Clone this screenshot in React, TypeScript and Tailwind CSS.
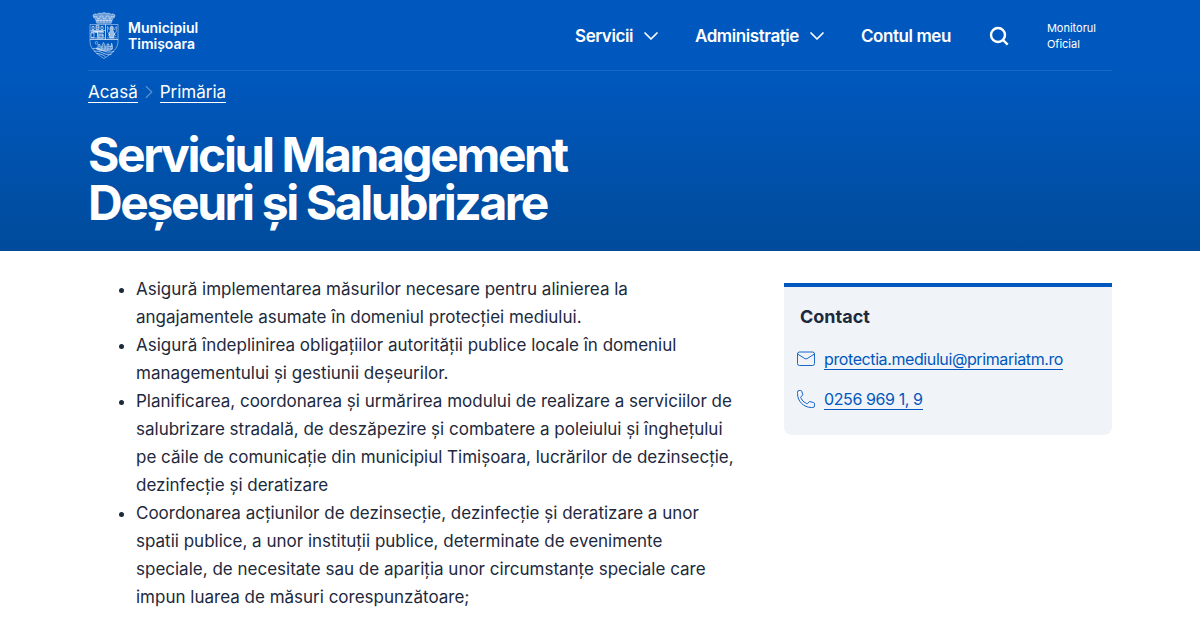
import { ChevronDown, ChevronRight } from 'lucide-react'

const duties: string[] = [
  'Asigură implementarea măsurilor necesare pentru alinierea la angajamentele asumate în domeniul protecției mediului.',
  'Asigură îndeplinirea obligațiilor autorității publice locale în domeniul managementului și gestiunii deșeurilor.',
  'Planificarea, coordonarea și urmărirea modului de realizare a serviciilor de salubrizare stradală, de deszăpezire și combatere a poleiului și înghețului pe căile de comunicație din municipiul Timișoara, lucrărilor de dezinsecție, dezinfecție și deratizare',
  'Coordonarea acțiunilor de dezinsecție, dezinfecție și deratizare a unor spatii publice, a unor instituții publice, determinate de evenimente speciale, de necesitate sau de apariția unor circumstanțe speciale care impun luarea de măsuri corespunzătoare;',
]

function Crest() {
  return (
    <svg
      className="h-12 w-8 shrink-0"
      viewBox="0 0 32 48"
      fill="none"
      stroke="#fff"
      strokeWidth="0.6"
      strokeOpacity="0.75"
      aria-hidden="true"
    >
      {/* mural crown */}
      <path d="M5 3l2-1.2 2 .6 2-1.4 2 .6 3-1 3 1 2-.6 2 1.4 2-.6L27 3l-.6 2.6-1.6.6-1.6 5H8.800L7.200 6.200 5.600 5.600z" fill="#fff" fillOpacity="0.4" />
      <path d="M6 4.500h3v2h3V4h3v2.500h3V4h3v2.500h2v-2h3M8 8.500h16M10 7v3M13 7v3M16 7v4M19 7v3M22 7v3" />
      {/* shield */}
      <path d="M2 12.500h28v17c0 7-6 12-14 17-8-5-14-10-14-17z" />
      <path d="M2 27.500h28M17.500 12.500v15" strokeWidth="0.9" />
      {/* fortress */}
      <path d="M2.500 18.500h14.500M4 14.500h2v3H4zM8 13.500h3v4H8zM13 14.500h2v3h-2zM3 21h3v4.500H3zM7.500 20h2v5M11 22h4v4h-4zM3 26h14M5 19.500h10M10 21v6" strokeWidth="0.8" />
      <path d="M3 19h13v2H3zM8 14.500h3v2H8zM11.500 22.500h4v2h-4z" fill="#fff" fillOpacity="0.5" stroke="none" />
      {/* winged figure */}
      <path d="M23.700 14l1.600 1-.3 3.500 1.400 3-.7 4.500h-4l-.7-4.500 1.400-3-.3-3.500z" fill="#fff" fillOpacity="0.6" />
      <path d="M21.500 18l-2-3.500v5l2 3.500M26 18l2.300-3.500v5L26 23M19 26h10M20 24l2-2M28 24l-2-2" />
      {/* town and bridge */}
      <circle cx="8.500" cy="30.800" r="1.300" />
      <path d="M8 36.500l2-1.500v-2.500h2V35h2v-2l1.500-2.500L17 33v2h2v-3h2v2.500h2.500V31l1 2.500V37l-3 1.500H12z" fill="#fff" fillOpacity="0.25" />
      <path d="M9 37h15M11 35.500v2M14 34v4M17 34v4M20 34v4M23 33v4" />
      {/* river */}
      <path d="M4.500 36.500c4-.5 7 .5 10 2s7 2.200 11.500 1M6 39c4 0 6 .5 9 2s5 1.500 8.500 1.300M8.500 41.500c3 0 6 .8 9 3.200" strokeWidth="0.8" />
    </svg>
  )
}

function SearchIcon() {
  return (
    <svg width="20" height="20" viewBox="0 0 20 20" fill="none" stroke="currentColor" strokeWidth="2.4" aria-hidden="true">
      <circle cx="9" cy="9" r="7" />
      <path d="M14 14l4.700 4.700" />
    </svg>
  )
}

function MailIcon() {
  return (
    <svg className="shrink-0" width="20" height="20" viewBox="0 0 20 20" fill="none" stroke="currentColor" strokeWidth="0.9" aria-hidden="true">
      <rect x="1.500" y="3" width="17" height="13.500" rx="2" />
      <path d="M1.500 5l7.400 4.600a2.100 2.100 0 0 0 2.200 0l7.400-4.600" />
    </svg>
  )
}

function PhoneIcon() {
  return (
    <svg className="shrink-0" width="20" height="20" viewBox="0 0 24 24" fill="none" stroke="currentColor" strokeWidth="1.1" strokeLinejoin="round" aria-hidden="true">
      <path d="M1.800 5.500c0 9.200 7.500 16.700 16.700 16.700h1.700a2 2 0 0 0 2-2v-2.700c0-.6-.4-1.100-1-1.200l-4.600-1.200c-.5-.1-1 .1-1.300.5l-1.200 1.600c-.3.4-.8.600-1.300.4a14 14 0 0 1-7.200-7.200c-.2-.5 0-1 .4-1.300l1.600-1.200c.4-.3.6-.8.500-1.300L6.900 2.800a1.300 1.300 0 0 0-1.200-1H3.800a2 2 0 0 0-2 2z" />
    </svg>
  )
}

export default function App() {
  return (
    <div className="min-h-screen bg-white font-['Inter',sans-serif] text-[17px]/7 text-slate-800">
      <header className="bg-linear-to-b from-[#0058be] from-28% to-[#004b9b] pb-6 text-white">
        <div className="mx-auto max-w-5xl">
          <div className="flex h-[71px] items-center justify-between border-b border-white/10 pt-0.5">
            <a href="#" className="flex items-center gap-2 text-sm/4 font-semibold">
              <Crest />
              <span>
                Municipiul
                <br />
                Timișoara
              </span>
            </a>
            <nav className="flex items-center gap-8 pr-4 font-semibold tracking-tight">
              <button type="button" className="flex items-center gap-1.5">
                Servicii
                <ChevronDown size={24} strokeWidth={1.7} />
              </button>
              <button type="button" className="flex items-center gap-1.5">
                Administrație
                <ChevronDown size={24} strokeWidth={1.7} />
              </button>
              <a href="#">Contul meu</a>
              <button type="button" aria-label="Caută" className="flex size-8 items-center justify-center">
                <SearchIcon />
              </button>
              <a href="#" className="text-[11px]/4 font-normal tracking-normal">
                Monitorul
                <br />
                Oficial
              </a>
            </nav>
          </div>

          <div className="flex h-8 items-end">
            <a href="#" className="border-b border-white leading-5">Acasă</a>
            <ChevronRight size={22} strokeWidth={1.3} className="text-white/35" />
            <a href="#" className="border-b border-white leading-5">Primăria</a>
          </div>

          <h1 className="mt-7 max-w-xl text-5xl/12 font-bold tracking-tighter">
            Serviciul Management Deșeuri și Salubrizare
          </h1>
        </div>
      </header>

      <main className="mx-auto grid max-w-5xl grid-cols-[2fr_1fr] items-start gap-10 pt-6">
        <ul className="list-disc pr-2 pl-12">
          {duties.map((duty) => (
            <li key={duty}>{duty}</li>
          ))}
        </ul>

        <aside className="mt-2 rounded-b-lg border-t-4 border-[#0058be] bg-[#f0f3f8] px-4 pt-4 pb-6">
          <h2 className="text-lg/7 font-bold">Contact</h2>
          <div className="mt-4 flex flex-col gap-4 text-base tracking-tight text-[#0058be]">
            <div className="-ml-1 flex h-6 items-center gap-2">
              <MailIcon />
              <a href="mailto:protectia.mediului@primariatm.ro" className="border-b border-current leading-5">
                protectia.mediului@primariatm.ro
              </a>
            </div>
            <div className="-ml-1 flex h-6 items-center gap-2">
              <PhoneIcon />
              <a href="tel:0256969" className="border-b border-current leading-5">
                0256 969 1, 9
              </a>
            </div>
          </div>
        </aside>
      </main>
    </div>
  )
}
